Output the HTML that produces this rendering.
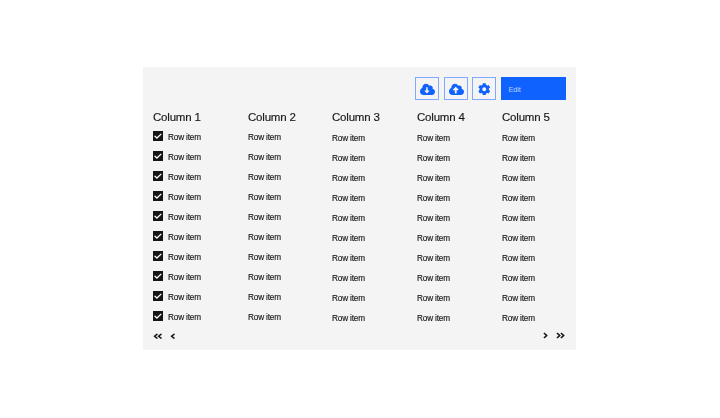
<!DOCTYPE html>
<html><head><meta charset="utf-8"><title>Table</title>
<style>
html,body{margin:0;padding:0;background:#ffffff;width:720px;height:418px;overflow:hidden;}
body{position:relative;font-family:"Liberation Sans",sans-serif;color:#161616;}
.panel{position:absolute;left:143px;top:67px;width:433px;height:283px;background:#f4f4f4;}
.t{position:absolute;white-space:nowrap;line-height:0;will-change:transform;-webkit-text-stroke-width:0.15px;}
.h{font-size:11.5px;letter-spacing:-0.2px;}
.r{font-size:8.2px;letter-spacing:-0.15px;}
.btn{position:absolute;box-sizing:border-box;width:24px;height:23px;border:1px solid #80a8ff;background:#f4f4f4;}
.btn svg{position:absolute;}
.edit{position:absolute;left:501px;top:77px;width:65px;height:23px;background:#0f62fe;}
.cb{position:absolute;width:10px;height:10px;background:#161616;}
.cb svg{position:absolute;left:0;top:0;}
.ic{position:absolute;}
</style></head><body>
<div class="panel"></div>
<div class="btn" style="left:415px;top:77px"><svg style="left:4px;top:4.5px" width="15" height="12.8" viewBox="0 0 640 512" preserveAspectRatio="none"><path fill="#0f62fe" d="M537.6 226.6c4.1-10.7 6.4-22.4 6.4-34.6 0-53-43-96-96-96-19.7 0-38.1 6-53.3 16.2C367 64.2 315.3 32 256 32c-88.4 0-160 71.6-160 160 0 2.7.1 5.4.2 8.1C40.2 219.8 0 273.2 0 336c0 79.5 64.5 144 144 144h368c70.7 0 128-57.3 128-128 0-61.9-44-113.6-102.4-125.4zm-139.9 93L305 412.3c-4.7 4.7-12.3 4.7-17 0l-92.7-92.7c-7.6-7.6-2.2-20.5 8.5-20.5H264V180c0-6.6 5.4-12 12-12h40c6.6 0 12 5.4 12 12v119.1h61.1c10.7 0 16.1 12.9 8.6 20.5z"/></svg></div>
<div class="btn" style="left:444px;top:77px"><svg style="left:3.6px;top:4.5px" width="15" height="12.8" viewBox="0 0 640 512" preserveAspectRatio="none"><path fill="#0f62fe" d="M537.6 226.6c4.1-10.7 6.4-22.4 6.4-34.6 0-53-43-96-96-96-19.7 0-38.1 6-53.3 16.2C367 64.2 315.3 32 256 32c-88.4 0-160 71.6-160 160 0 2.7.1 5.4.2 8.1C40.2 219.8 0 273.2 0 336c0 79.5 64.5 144 144 144h368c70.7 0 128-57.3 128-128 0-61.9-44-113.6-102.4-125.4zM393.4 288H328v112c0 8.8-7.2 16-16 16h-48c-8.8 0-16-7.2-16-16V288h-65.4c-14.3 0-21.4-17.2-11.3-27.3l105.4-105.4c6.2-6.2 16.4-6.2 22.6 0l105.4 105.4c10.1 10.1 2.9 27.3-11.3 27.3z"/></svg></div>
<div class="btn" style="left:472px;top:77px"><svg style="left:5.4px;top:4.7px" width="12.5" height="12.5" viewBox="0 0 512 512" preserveAspectRatio="none"><path fill="#0f62fe" d="M487.4 315.7l-42.6-24.6c4.3-23.2 4.3-47 0-70.2l42.6-24.6c4.9-2.8 7.1-8.6 5.5-14-11.1-35.6-30-67.8-54.7-94.6-3.8-4.1-10-5.1-14.8-2.300L380.800 110c-17.9-15.4-38.5-27.3-60.8-35.1V25.8c0-5.6-3.9-10.5-9.4-11.7-36.7-8.2-74.3-7.8-109.2 0-5.5 1.2-9.4 6.1-9.4 11.7V75c-22.2 7.9-42.8 19.8-60.8 35.1L88.7 85.5c-4.9-2.8-11-1.9-14.8 2.3-24.7 26.7-43.6 58.9-54.7 94.6-1.7 5.4.6 11.2 5.5 14L67.3 221c-4.3 23.2-4.3 47 0 70.2l-42.6 24.6c-4.9 2.8-7.1 8.6-5.5 14 11.1 35.6 30 67.8 54.7 94.6 3.8 4.1 10 5.1 14.8 2.3l42.6-24.6c17.9 15.4 38.5 27.3 60.8 35.1v49.2c0 5.6 3.9 10.5 9.4 11.7 36.7 8.2 74.3 7.8 109.2 0 5.5-1.2 9.4-6.1 9.4-11.7v-49.2c22.2-7.9 42.8-19.8 60.8-35.1l42.6 24.6c4.9 2.8 11 1.9 14.8-2.3 24.7-26.7 43.6-58.9 54.7-94.6 1.5-5.5-.7-11.300-5.600-14.100zM256 336c-44.1 0-80-35.9-80-80s35.9-80 80-80 80 35.9 80 80-35.9 80-80 80z"/></svg></div>
<div class="edit"></div>
<div style="position:absolute;white-space:nowrap;line-height:0;left:508.5px;top:90px;font-size:7.3px;color:#b8d0ff;letter-spacing:-0.1px">Edit</div>
<div class="t h" style="left:153px;top:117px">Column 1</div>
<div class="t h" style="left:247.7px;top:117px">Column 2</div>
<div class="t h" style="left:332.2px;top:117px">Column 3</div>
<div class="t h" style="left:416.7px;top:117px">Column 4</div>
<div class="t h" style="left:501.5px;top:117px">Column 5</div>
<div class="cb" style="left:153px;top:131px"><svg width="10" height="10" viewBox="0 0 10 10"><path d="M2 5.3 L3.9 7 L7.8 3.3" fill="none" stroke="#fff" stroke-width="1.3" stroke-linecap="square" stroke-linejoin="miter"/></svg></div>
<div class="t r" style="left:167.5px;top:138px">Row item</div>
<div class="t r" style="left:247.8px;top:138px">Row item</div>
<div class="t r" style="left:332.1px;top:139px">Row item</div>
<div class="t r" style="left:416.9px;top:139px">Row item</div>
<div class="t r" style="left:501.6px;top:139px">Row item</div>
<div class="cb" style="left:153px;top:151px"><svg width="10" height="10" viewBox="0 0 10 10"><path d="M2 5.3 L3.9 7 L7.8 3.3" fill="none" stroke="#fff" stroke-width="1.3" stroke-linecap="square" stroke-linejoin="miter"/></svg></div>
<div class="t r" style="left:167.5px;top:158px">Row item</div>
<div class="t r" style="left:247.8px;top:158px">Row item</div>
<div class="t r" style="left:332.1px;top:159px">Row item</div>
<div class="t r" style="left:416.9px;top:159px">Row item</div>
<div class="t r" style="left:501.6px;top:159px">Row item</div>
<div class="cb" style="left:153px;top:171px"><svg width="10" height="10" viewBox="0 0 10 10"><path d="M2 5.3 L3.9 7 L7.8 3.3" fill="none" stroke="#fff" stroke-width="1.3" stroke-linecap="square" stroke-linejoin="miter"/></svg></div>
<div class="t r" style="left:167.5px;top:178px">Row item</div>
<div class="t r" style="left:247.8px;top:178px">Row item</div>
<div class="t r" style="left:332.1px;top:179px">Row item</div>
<div class="t r" style="left:416.9px;top:179px">Row item</div>
<div class="t r" style="left:501.6px;top:179px">Row item</div>
<div class="cb" style="left:153px;top:191px"><svg width="10" height="10" viewBox="0 0 10 10"><path d="M2 5.3 L3.9 7 L7.8 3.3" fill="none" stroke="#fff" stroke-width="1.3" stroke-linecap="square" stroke-linejoin="miter"/></svg></div>
<div class="t r" style="left:167.5px;top:198px">Row item</div>
<div class="t r" style="left:247.8px;top:198px">Row item</div>
<div class="t r" style="left:332.1px;top:199px">Row item</div>
<div class="t r" style="left:416.9px;top:199px">Row item</div>
<div class="t r" style="left:501.6px;top:199px">Row item</div>
<div class="cb" style="left:153px;top:211px"><svg width="10" height="10" viewBox="0 0 10 10"><path d="M2 5.3 L3.9 7 L7.8 3.3" fill="none" stroke="#fff" stroke-width="1.3" stroke-linecap="square" stroke-linejoin="miter"/></svg></div>
<div class="t r" style="left:167.5px;top:218px">Row item</div>
<div class="t r" style="left:247.8px;top:218px">Row item</div>
<div class="t r" style="left:332.1px;top:219px">Row item</div>
<div class="t r" style="left:416.9px;top:219px">Row item</div>
<div class="t r" style="left:501.6px;top:219px">Row item</div>
<div class="cb" style="left:153px;top:231px"><svg width="10" height="10" viewBox="0 0 10 10"><path d="M2 5.3 L3.9 7 L7.8 3.3" fill="none" stroke="#fff" stroke-width="1.3" stroke-linecap="square" stroke-linejoin="miter"/></svg></div>
<div class="t r" style="left:167.5px;top:238px">Row item</div>
<div class="t r" style="left:247.8px;top:238px">Row item</div>
<div class="t r" style="left:332.1px;top:239px">Row item</div>
<div class="t r" style="left:416.9px;top:239px">Row item</div>
<div class="t r" style="left:501.6px;top:239px">Row item</div>
<div class="cb" style="left:153px;top:251px"><svg width="10" height="10" viewBox="0 0 10 10"><path d="M2 5.3 L3.9 7 L7.8 3.3" fill="none" stroke="#fff" stroke-width="1.3" stroke-linecap="square" stroke-linejoin="miter"/></svg></div>
<div class="t r" style="left:167.5px;top:258px">Row item</div>
<div class="t r" style="left:247.8px;top:258px">Row item</div>
<div class="t r" style="left:332.1px;top:259px">Row item</div>
<div class="t r" style="left:416.9px;top:259px">Row item</div>
<div class="t r" style="left:501.6px;top:259px">Row item</div>
<div class="cb" style="left:153px;top:271px"><svg width="10" height="10" viewBox="0 0 10 10"><path d="M2 5.3 L3.9 7 L7.8 3.3" fill="none" stroke="#fff" stroke-width="1.3" stroke-linecap="square" stroke-linejoin="miter"/></svg></div>
<div class="t r" style="left:167.5px;top:278px">Row item</div>
<div class="t r" style="left:247.8px;top:278px">Row item</div>
<div class="t r" style="left:332.1px;top:279px">Row item</div>
<div class="t r" style="left:416.9px;top:279px">Row item</div>
<div class="t r" style="left:501.6px;top:279px">Row item</div>
<div class="cb" style="left:153px;top:291px"><svg width="10" height="10" viewBox="0 0 10 10"><path d="M2 5.3 L3.9 7 L7.8 3.3" fill="none" stroke="#fff" stroke-width="1.3" stroke-linecap="square" stroke-linejoin="miter"/></svg></div>
<div class="t r" style="left:167.5px;top:298px">Row item</div>
<div class="t r" style="left:247.8px;top:298px">Row item</div>
<div class="t r" style="left:332.1px;top:299px">Row item</div>
<div class="t r" style="left:416.9px;top:299px">Row item</div>
<div class="t r" style="left:501.6px;top:299px">Row item</div>
<div class="cb" style="left:153px;top:311px"><svg width="10" height="10" viewBox="0 0 10 10"><path d="M2 5.3 L3.9 7 L7.8 3.3" fill="none" stroke="#fff" stroke-width="1.3" stroke-linecap="square" stroke-linejoin="miter"/></svg></div>
<div class="t r" style="left:167.5px;top:318px">Row item</div>
<div class="t r" style="left:247.8px;top:318px">Row item</div>
<div class="t r" style="left:332.1px;top:319px">Row item</div>
<div class="t r" style="left:416.9px;top:319px">Row item</div>
<div class="t r" style="left:501.6px;top:319px">Row item</div>
<svg class="ic" style="left:153px;top:332.1px" width="9.4" height="8.5" viewBox="0 0 448 512" preserveAspectRatio="none"><path fill="#161616" d="M223.7 239l136-136c9.4-9.4 24.6-9.4 33.9 0l22.6 22.6c9.4 9.4 9.4 24.6 0 33.9L319.9 256l96.4 96.4c9.4 9.4 9.4 24.6 0 33.9L393.7 409c-9.4 9.4-24.6 9.4-33.9 0l-136-136c-9.5-9.4-9.5-24.6-.1-34zm-192 34l136 136c9.4 9.4 24.6 9.4 33.9 0l22.6-22.6c9.4-9.4 9.4-24.6 0-33.9L127.9 256l96.4-96.4c9.4-9.4 9.4-24.6 0-33.9L201.7 103c-9.4-9.4-24.6-9.4-33.9 0l-136 136c-9.5 9.4-9.5 24.6-.1 34z"/></svg>
<svg class="ic" style="left:170px;top:332.1px" width="5.4" height="8.5" viewBox="0 0 256 512" preserveAspectRatio="none"><path fill="#161616" d="M31.7 239l136-136c9.4-9.4 24.6-9.4 33.9 0l22.6 22.6c9.4 9.4 9.4 24.6 0 33.9L127.9 256l96.4 96.4c9.4 9.4 9.4 24.6 0 33.900L201.700 409c-9.4 9.4-24.6 9.4-33.9 0l-136-136c-9.5-9.4-9.5-24.6-.1-34z"/></svg>
<svg class="ic" style="left:543.3px;top:330.6px" width="5.2" height="9" viewBox="0 0 256 512" preserveAspectRatio="none"><path fill="#161616" d="M224.3 273l-136 136c-9.4 9.4-24.6 9.4-33.9 0l-22.6-22.6c-9.4-9.4-9.4-24.6 0-33.9l96.4-96.4-96.4-96.4c-9.4-9.4-9.4-24.6 0-33.9L54.3 103c9.4-9.4 24.6-9.4 33.9 0l136 136c9.5 9.4 9.5 24.6.1 34z"/></svg>
<svg class="ic" style="left:555.7px;top:330.6px" width="9.2" height="9" viewBox="0 0 448 512" preserveAspectRatio="none"><path fill="#161616" d="M224.3 273l-136 136c-9.4 9.4-24.6 9.4-33.9 0l-22.6-22.6c-9.4-9.4-9.4-24.6 0-33.9l96.4-96.4-96.4-96.4c-9.4-9.4-9.4-24.6 0-33.9L54.3 103c9.4-9.4 24.6-9.4 33.9 0l136 136c9.5 9.4 9.5 24.6.1 34zm192-34l-136-136c-9.4-9.4-24.6-9.4-33.9 0l-22.6 22.6c-9.4 9.4-9.4 24.6 0 33.9l96.4 96.4-96.4 96.4c-9.4 9.4-9.4 24.6 0 33.9l22.6 22.6c9.4 9.4 24.6 9.4 33.9 0l136-136c9.4-9.2 9.4-24.4 0-33.8z"/></svg>
</body></html>
